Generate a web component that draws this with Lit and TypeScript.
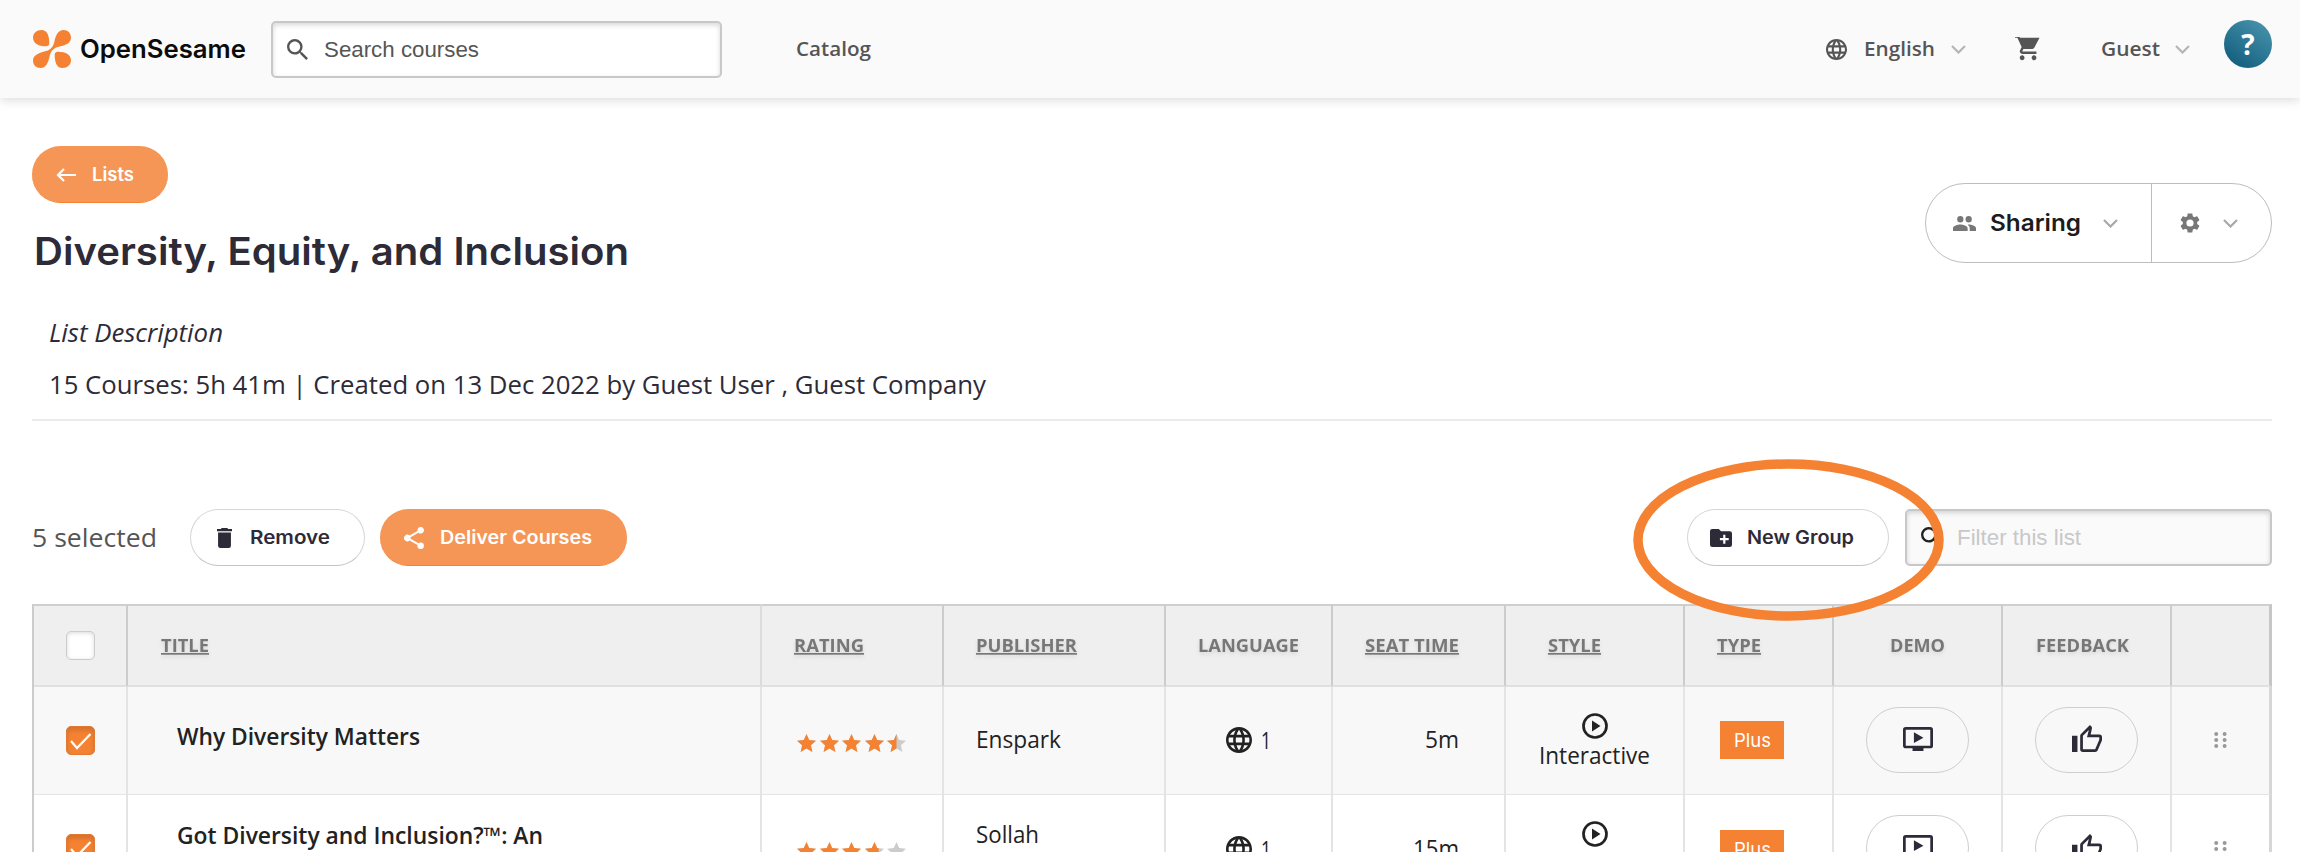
import { LitElement, html, css, svg } from "lit";
import { customElement } from "lit/decorators.js";

type Box = [number, number, number, number];

const fit = (cls: string, text: string, w: number, h: number, base: number) => html`
  <svg class="fit ${cls}" width=${w} height=${h} aria-label=${text}>
    <text x="0" y=${base} textLength=${w} lengthAdjust="spacingAndGlyphs">${text}</text>
  </svg>`;

const icon = (cls: string, w: number, h: number, box: Box, body: unknown) => html`
  <svg class="ico ${cls}" width=${w} height=${h} viewBox=${box.join(" ")} preserveAspectRatio="none">${body}</svg>`;

const chevron = () => icon("chev", 15, 9, [0, 0, 15, 9],
  svg`<path d="M1 1l6.5 6.5L14 1" fill="none" stroke="currentColor" stroke-width="2.2"/>`);
const globe = (s: number) => icon("", s, s, [2, 2, 20, 20],
  svg`<path fill="currentColor" d="M11.99 2C6.47 2 2 6.48 2 12s4.47 10 9.99 10C17.52 22 22 17.52 22 12S17.52 2 11.99 2zm6.93 6h-2.95a15.65 15.65 0 0 0-1.38-3.56A8.03 8.03 0 0 1 18.92 8zM12 4.04c.83 1.2 1.48 2.53 1.91 3.96h-3.82c.43-1.43 1.08-2.76 1.91-3.96zM4.26 14C4.1 13.36 4 12.69 4 12s.1-1.36.26-2h3.38c-.08.66-.14 1.32-.14 2s.06 1.34.14 2H4.26zm.82 2h2.95c.32 1.25.78 2.45 1.38 3.56A7.99 7.99 0 0 1 5.08 16zm2.95-8H5.08a7.99 7.99 0 0 1 4.33-3.56A15.65 15.65 0 0 0 8.03 8zM12 19.96c-.83-1.2-1.48-2.53-1.91-3.96h3.82c-.43 1.43-1.08 2.76-1.91 3.96zM14.34 14H9.66c-.09-.66-.16-1.32-.16-2s.07-1.35.16-2h4.68c.09.65.16 1.32.16 2s-.07 1.34-.16 2zm.25 5.56c.6-1.11 1.06-2.31 1.38-3.56h2.95a8.03 8.03 0 0 1-4.33 3.56zM16.36 14c.08-.66.14-1.32.14-2s-.06-1.34-.14-2h3.38c.16.64.26 1.31.26 2s-.1 1.36-.26 2h-3.38z"/>`);
const magnifier = (s: number) => icon("", s, s, [3, 3, 17.5, 17.5],
  svg`<path fill="currentColor" d="M15.5 14h-.79l-.28-.27A6.471 6.471 0 0 0 16 9.5 6.5 6.5 0 1 0 9.5 16c1.61 0 3.09-.59 4.23-1.57l.27.28v.79l5 4.99L20.49 19l-4.99-5zm-6 0C7.01 14 5 11.99 5 9.5S7.01 5 9.5 5 14 7.01 14 9.5 11.99 14 9.5 14z"/>`);

const STAR = "M9.5 0l2.7 6.1 6.8.7-5.1 4.5 1.5 6.7-5.9-3.500L3.600 18l1.500-6.700L0 6.800l6.800-.7z";

@customElement("rating-stars")
class RatingStars extends LitElement {
  static properties = { value: { type: Number } };
  declare value: number;
  static styles = css`
    :host { display: flex; gap: 3.6px; }
    svg { display: block; }
  `;
  render() {
    return [0, 1, 2, 3, 4].map((i) => {
      const part = Math.max(0, Math.min(1, this.value - i));
      return html`<svg width="19" height="18" viewBox="0 0 19 18">
        <defs><clipPath id="c${i}"><rect width=${19 * part} height="18" /></clipPath></defs>
        <path d=${STAR} fill="#ccc" /><path d=${STAR} fill="#f48232" clip-path="url(#c${i})" />
      </svg>`;
    });
  }
}

interface Course { title: string; titleW: number; stars: number; publisher: string; pubW: number; time: string; timeW: number; top: boolean; }

const COURSES: Course[] = [
  { title: "Why Diversity Matters", titleW: 243, stars: 4.5, publisher: "Enspark", pubW: 85, time: "5m", timeW: 34, top: false },
  { title: "Got Diversity and Inclusion?™: An", titleW: 366, stars: 3.72, publisher: "Sollah", pubW: 63, time: "15m", timeW: 46, top: true },
];

@customElement("app-root")
class AppRoot extends LitElement {
  static styles = css`
    :host { display: block; position: relative; width: 2300px; height: 852px; overflow: hidden; background: #fff;
      font-family: "Open Sans", "Noto Sans", sans-serif; color: #2d2b38; }
    * { box-sizing: border-box; }
    svg { display: block; flex: none; }
    .fit { overflow: visible; fill: currentColor; }
    header { display: flex; height: 98px; background: #fafafa; padding: 0 28px 0 33px;
      box-shadow: 0 2px 10px rgba(0,0,0,.15); color: #555; align-items: center; }
    .brand { font: 600 25.5px Inter, sans-serif; color: #0c0c0c; margin-left: 9px; }
    .search { display: flex; align-items: center; width: 451px; height: 57px; margin-left: 25px; padding-left: 14px; gap: 16px;
      background: #fff; border: 2px solid #c8c8c8; border-radius: 5px; box-shadow: inset 0 2px 5px rgba(0,0,0,.16); }
    .arial { font: 22.5px "Liberation Sans", Arial, sans-serif; }
    .nav { font-size: 20.5px; font-weight: 550; }
    .catalog { margin-left: 74px; }
    .grow { flex: 1; }
    .chev { color: #b5b5b5; }
    .help { width: 48px; height: 48px; border-radius: 50%; background: linear-gradient(215deg, #4c98b0, #0c5778); color: #fff;
      font: 700 28px/48px "Open Sans", sans-serif; text-align: center; margin: -11px 0 0 34px; }
    main { padding: 48px 28px 0 32px; }
    .top { display: flex; justify-content: space-between; height: 150px; }
    .btn { display: flex; align-items: center; height: 57px; border-radius: 29px; border: 1.5px solid #d6d6d6; border-bottom-color: #c4c4c4; background: #fff; color: #2d2b38; }
    .orange { background: #f59656; border: 0; border-bottom: 1px solid #f48232; color: #fff; padding-top: 1px; }
    .pop { font: 600 18.500px Inter, sans-serif; }
    .lists { width: 136px; padding-left: 24px; gap: 16px; }
    .lists .pop { margin-top: -1px; }
    h1 { margin: 25px 0 0 2px; font: 600 38.500px Inter, sans-serif; }
    .share { display: flex; margin-top: 37px; width: 347px; height: 80px; border: 1px solid #bdbdbd; border-radius: 40px; align-items: center; color: #777; }
    .share .left { display: flex; align-items: center; width: 226px; height: 100%; padding-left: 27px; border-right: 1px solid #bdbdbd; }
    .share .right { display: flex; align-items: center; padding-left: 28px; gap: 23px; }
    .share .chev { color: #a8a8a8; }
    .sharing { font: 600 23px Inter, sans-serif; color: #1c1c1c; margin: 0 22px 0 14px; }
    .desc { height: 125px; border-bottom: 2px solid #ebebeb; padding: 20px 0 0 17px; font-size: 25px; }
    .desc .it { font-style: italic; }
    .desc .meta { margin-top: 12px; }
    .tools { display: flex; align-items: center; height: 57px; margin: 88px 0 38px; }
    .count { font-size: 26px; color: #555; }
    .remove { width: 175px; margin-left: 33px; padding-left: 26px; gap: 18px; }
    .deliver { width: 247px; margin-left: 15px; padding-left: 24px; gap: 16px; }
    .group { width: 202px; padding-left: 22px; gap: 15px; }
    .filter { display: flex; align-items: center; width: 367px; height: 57px; margin-left: 16px; padding-left: 14px; gap: 15px; background: #fafafa;
      border: 2px solid #c8c8c8; border-radius: 5px; box-shadow: inset 0 2px 5px rgba(0,0,0,.16); color: #222; }
    .ph { color: #c8c8c8; }
    .grid { display: grid; grid-template-columns: 94px 634px 182px 222px 167px 173px 179px 149px 169px 169px 100px; border-left: 2px solid #ccc; }
    .th, .td { display: flex; align-items: center; border-right: 2px solid #e4e4e4; border-bottom: 1.5px solid #e4e4e4; }
    .th { height: 82.500px; background: #efefef; border-top: 2px solid #cfcfcf; border-right-color: #ccc; border-bottom: 2px solid #e0e0e0; color: #777;
      font-weight: 700; font-size: 17px; }
    .th:nth-child(2) { border-right-color: #dcdcdc; }
    .th:nth-child(11) { border-right: 3px solid #c6c6c6; }
    .td:nth-child(11n) { border-right: 3px solid #d6d6d6; }
    .th .fit { margin-top: 1px; filter: drop-shadow(0 2px 2px rgba(0,0,0,.1)); }
    .th .ul text { text-decoration: underline; text-decoration-thickness: 1.500px; text-underline-offset: 2px; text-decoration-color: #999; text-decoration-skip-ink: none; }
    .td { height: 108.500px; color: #222; font-size: 23px; }
    .odd { background: #f8f8f8; }
    .c { justify-content: center; }
    .r { justify-content: flex-end; padding-right: 45px; }
    .l { padding-left: 32px; }
    .title { padding-left: 33px; }
    .st { padding-left: 42px; }
    .box { width: 29px; height: 29px; border-radius: 5px; border: 1.500px solid #ccc; background: #fff; box-shadow: inset 0 1px 4px rgba(0,0,0,.15); }
    .on { background: #f48232; border: 1px solid #e07a34; box-shadow: inset 0 3px 5px rgba(0,0,0,.14); }
    .name { padding-left: 49px; align-items: flex-start; padding-top: 34px; font-weight: 550; font-size: 23px; }
    .second.name { padding-top: 25px; }
    .second.pub { align-items: flex-start; padding-top: 24px; }
    .rate { padding: 5px 0 0 35px; }
    .lang { gap: 9px; }
    .stack { flex-direction: column; gap: 3px; justify-content: flex-start; padding-top: 26px; }
    .type { padding: 0 0 0 35px; }
    .plus { background: #f48232; color: #fff; width: 64px; height: 38px; display: flex; justify-content: center; align-items: center; font: 18.500px Inter, sans-serif; }
    .pill { width: 103px; height: 66px; border-radius: 33px; border: 1.500px solid #cecece; display: flex; align-items: center; justify-content: center; color: #2d2b38; margin-top: -1px; }
    .pill svg { margin-top: -2px; }
    .ring { position: absolute; left: 1633px; top: 459px; }
  `;

  private th(text: string, w: number, cls: string, ul = false) {
    return html`<div class="th ${cls}">${text ? fit(ul ? "ul" : "", text, w, 24, 18) : ""}</div>`;
  }

  private row(c: Course) {
    const k = c.top ? "second" : "odd";
    return html`
      <div class="td c ${k}"><div class="box on"><svg width="27" height="27" viewBox="0 0 27 27"><path d="M4 14l6 7L23.500 7" fill="none" stroke="#fff" stroke-width="2.2"/></svg></div></div>
      <div class="td name ${k}">${fit("", c.title, c.titleW, 32, 24)}</div>
      <div class="td rate ${k}"><rating-stars .value=${c.stars}></rating-stars></div>
      <div class="td l pub ${k}">${fit("", c.publisher, c.pubW, 32, 24)}</div>
      <div class="td c lang ${k}">${globe(26)}${fit("", "1", 10, 32, 25)}</div>
      <div class="td r ${k}">${fit("", c.time, c.timeW, 32, 24)}</div>
      <div class="td stack ${k}">${icon("", 26, 26, [0, 0, 26, 26], svg`<circle cx="13" cy="13" r="11.500" fill="none" stroke="currentColor" stroke-width="2.700"/><path fill="currentColor" d="M10 7.500v11l8.500-5.500z"/>`)}
        ${c.top ? "" : fit("", "Interactive", 111, 30, 22)}</div>
      <div class="td type ${k}"><div class="plus">${fit("", "Plus", 37, 24, 19)}</div></div>
      <div class="td c ${k}"><div class="pill">${icon("", 30, 24, [1, 3, 22, 18], svg`<path fill="currentColor" d="M9 7v8l7-4zm12-4H3a2 2 0 0 0-2 2v12c0 1.100.9 2 2 2h5v2h8v-2h5a2 2 0 0 0 2-2V5a2 2 0 0 0-2-2zm0 14H3V5h18z"/>`)}</div></div>
      <div class="td c ${k}"><div class="pill">${icon("", 30, 27, [1, 1, 22, 20], svg`<path fill="currentColor" d="M9 21h9c.83 0 1.540-.5 1.840-1.220l3.020-7.050c.09-.23.14-.47.14-.73v-2a2 2 0 0 0-2-2h-6.310l.95-4.570.03-.32c0-.41-.17-.79-.44-1.060L14.170 1 7.580 7.590C7.220 7.950 7 8.450 7 9v10a2 2 0 0 0 2 2zM9 9l4.340-4.340L12 10h9v2l-3 7H9zM1 9h4v12H1z"/>`)}</div></div>
      <div class="td c ${k}">${icon("", 13, 16, [0, 0, 13, 16], [2, 8, 14].map((y) => svg`<circle cx="2.200" cy=${y} r="2" fill="#999"/><circle cx="10.600" cy=${y} r="2" fill="#999"/>`))}</div>`;
  }

  render() {
    return html`
      <header>
        ${icon("logo", 38, 38, [0, 0, 38, 38], svg`<path fill="#f48232" d="M8.500 0C3.500 0 0 3.500 0 7.500 0 13 5 16.300 13 16.300c2 0 3.300-1 3.300-3C16.300 5 14 0 8.500 0zM29.500 38c5 0 8.500-3.500 8.500-7.500 0-5.500-5-8.800-13-8.800-2 0-3.300 1-3.300 3 0 8.300 2.300 13.300 7.800 13.300zM38 8c0-5-3-8-7.500-8-5.500 0-7.500 5-9 11-1 5-2.500 7-6.500 9.500C10 22 0 23.500 0 30.500 0 35 3 38 7.500 38c5.500 0 7.500-5 9-11 1-5 2.500-7 6.500-9.500C28 16 38 15 38 8z"/>`)}
        ${fit("brand", "OpenSesame", 166, 34, 26)}
        <div class="search">${magnifier(21)}${fit("arial", "Search courses", 155, 28, 22)}</div>
        ${fit("nav catalog", "Catalog", 75, 28, 21)}
        <span class="grow"></span>
        ${globe(21)}
        <span style="width:17px"></span>${fit("nav", "English", 71, 28, 21)}
        <span style="width:16px"></span>${chevron()}
        <span style="width:49px"></span>${icon("cart", 25, 25, [1, 2, 21, 20], svg`<path fill="currentColor" transform="translate(0 -1.500)" d="M7 18c-1.100 0-2 .9-2 2s.9 2 2 2 2-.9 2-2-.9-2-2-2zM1 2v2h2l3.600 7.590-1.350 2.450C4.520 15.370 5.480 17 7 17h12v-2H7.420a.25.25 0 0 1-.22-.37L8.100 13h7.450c.75 0 1.410-.41 1.750-1.030L21.600 4H5.210l-.94-2zm16 16c-1.100 0-2 .9-2 2s.9 2 2 2 2-.9 2-2-.9-2-2-2z"/>`)}
        <span style="width:61px"></span>${fit("nav", "Guest", 59, 28, 21)}
        <span style="width:15px"></span>${chevron()}
        <div class="help">?</div>
      </header>
      <main>
        <div class="top">
          <div>
            <div class="btn orange lists">${icon("", 20, 14, [0, 0, 20, 14], svg`<path d="M20 7H2M8 1L2 7l6 6" fill="none" stroke="currentColor" stroke-width="2.200"/>`)}${fit("pop", "Lists", 42, 24, 19)}</div>
            <h1>${fit("", "Diversity, Equity, and Inclusion", 595, 50, 37)}</h1>
          </div>
          <div class="share">
            <div class="left">
              ${icon("", 23, 15, [1, 5, 22, 14], svg`<path fill="currentColor" d="M16 11a3 3 0 1 0 0-6 3 3 0 0 0 0 6zm-8 0a3 3 0 1 0 0-6 3 3 0 0 0 0 6zm0 2c-2.330 0-7 1.170-7 3.500V19h14v-2.500C15 14.170 10.330 13 8 13zm8 0c-.29 0-.62.02-.97.050C16.190 13.890 17 15.020 17 16.500V19h6v-2.500c0-2.330-4.670-3.500-7-3.500z"/>`)}
              ${fit("sharing", "Sharing", 91, 32, 24)}${chevron()}
            </div>
            <div class="right">
              ${icon("", 20, 20, [2, 2, 20, 20], svg`<path fill="currentColor" d="M19.140 12.940c.04-.3.060-.61.060-.94 0-.32-.02-.64-.07-.94l2.030-1.580a.49.49 0 0 0 .12-.61l-1.920-3.320a.488.488 0 0 0-.59-.22l-2.390.96c-.5-.38-1.030-.7-1.620-.94l-.36-2.540a.484.484 0 0 0-.48-.41h-3.840c-.24 0-.43.17-.47.41l-.36 2.540c-.59.24-1.130.57-1.620.94l-2.390-.96c-.22-.08-.47 0-.59.22L2.740 8.870c-.12.21-.08.47.12.61l2.030 1.580c-.05.3-.09.63-.09.94s.02.64.07.94l-2.030 1.580a.49.49 0 0 0-.12.61l1.920 3.320c.12.22.37.29.59.22l2.390-.96c.5.38 1.030.7 1.620.94l.36 2.540c.05.24.24.41.48.41h3.840c.24 0 .44-.17.47-.41l.36-2.540c.59-.24 1.130-.56 1.620-.94l2.390.96c.22.08.47 0 .59-.22l1.920-3.320a.47.47 0 0 0-.12-.61zM12 15.600A3.600 3.600 0 1 1 12 8.400a3.600 3.600 0 0 1 0 7.200z"/>`)}
              ${chevron()}
            </div>
          </div>
        </div>
        <div class="desc">
          ${fit("it", "List Description", 174, 36, 26)}
          <div class="meta">${fit("", "15 Courses: 5h 41m | Created on 13 Dec 2022 by Guest User , Guest Company", 937, 36, 30)}</div>
        </div>
        <div class="tools">
          ${fit("count", "5 selected", 125, 36, 27)}
          <div class="btn remove">${icon("", 15, 20, [5, 3, 14, 18], svg`<path fill="currentColor" d="M6 19c0 1.100.9 2 2 2h8a2 2 0 0 0 2-2V7H6zM19 4h-3.500l-1-1h-5l-1 1H5v2h14z"/>`)}${fit("pop", "Remove", 80, 24, 18)}</div>
          <div class="btn orange deliver">${icon("", 20, 22, [3, 2, 18, 20], svg`<path fill="currentColor" d="M18 16.080c-.76 0-1.440.3-1.960.77L8.910 12.700c.05-.23.09-.46.09-.7s-.04-.47-.09-.7l7.050-4.110A2.990 2.990 0 1 0 15 5c0 .24.04.47.09.7L8.040 9.810A2.990 2.990 0 1 0 8.040 14.190l7.120 4.160c-.05.21-.08.43-.08.65A2.920 2.920 0 1 0 18 16.080z"/>`)}${fit("pop", "Deliver Courses", 152, 24, 18)}</div>
          <span class="grow"></span>
          <div class="btn group">${icon("", 22, 18, [2, 4, 20, 16], svg`<path fill="currentColor" d="M20 6h-8l-2-2H4a2 2 0 0 0-2 2v12a2 2 0 0 0 2 2h16a2 2 0 0 0 2-2V8a2 2 0 0 0-2-2zm-1 8h-3v3h-2v-3h-3v-2h3V9h2v3h3z"/>`)}${fit("pop", "New Group", 107, 24, 18)}</div>
          <div class="filter">${magnifier(21)}${fit("arial ph", "Filter this list", 124, 28, 21)}</div>
        </div>
        <div class="grid">
          <div class="th c"><div class="box"></div></div>
          ${this.th("TITLE", 48, "title", true)}
          ${this.th("RATING", 70, "l", true)}
          ${this.th("PUBLISHER", 101, "l", true)}
          ${this.th("LANGUAGE", 101, "c")}
          ${this.th("SEAT TIME", 94, "l", true)}
          ${this.th("STYLE", 53, "l st", true)}
          ${this.th("TYPE", 44, "l", true)}
          ${this.th("DEMO", 55, "c")}
          ${this.th("FEEDBACK", 93, "title")}
          ${this.th("", 0, "")}
          ${COURSES.map((c) => this.row(c))}
        </div>
      </main>
      <svg class="ring" width="312" height="163"><ellipse cx="155.500" cy="81" rx="150.500" ry="76" fill="none" stroke="#f48232" stroke-width="9.500"/></svg>
    `;
  }
}
